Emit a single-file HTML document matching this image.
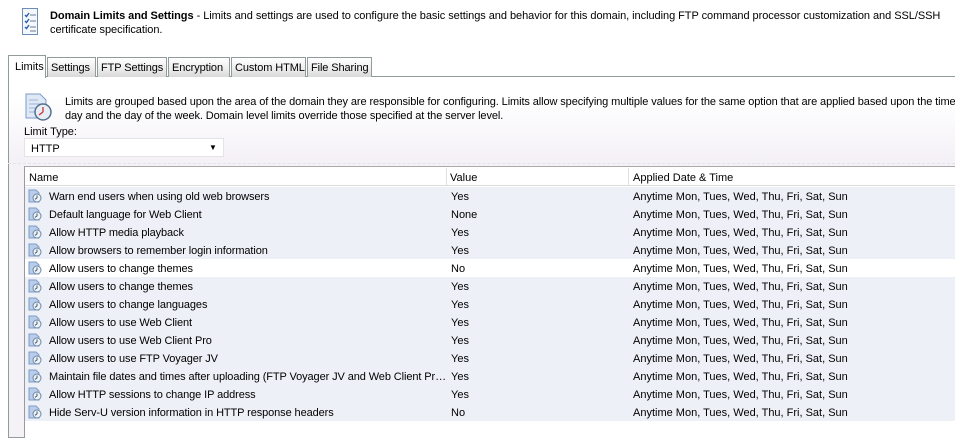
<!DOCTYPE html>
<html><head><meta charset="utf-8"><style>
*{margin:0;padding:0;box-sizing:border-box}
body{width:955px;height:438px;overflow:hidden;background:#fff;font:11px "Liberation Sans",Tahoma,sans-serif;color:#000;position:relative}
.a{position:absolute;white-space:nowrap}
.tab{position:absolute;top:57px;height:20px;border:1px solid #919b9c;border-bottom:none;background:linear-gradient(#fff,#ececec 60%,#d8d8d8);padding:4px 0 0 3px;font-size:11px;white-space:nowrap;overflow:hidden;letter-spacing:-0.1px}
.row{position:absolute;left:25px;width:930px;height:18px;background:#eef0f7}
.row span{position:absolute;top:4px;white-space:nowrap}
.ic{position:absolute;left:3px;top:2px;width:14px;height:14px}
</style></head><body>
<svg class="a" style="left:22px;top:8px" width="16" height="28" viewBox="0 0 16 28"><rect x=".5" y=".5" width="15" height="26" fill="#f4f7fb" stroke="#6d8cb8"/><path d="M3 7l1.5 1.5L7 5M3 13l1.5 1.5L7 11M3 19l1.5 1.5L7 17" stroke="#2a5fb5" stroke-width="1.4" fill="none"/><path d="M8 7h6M8 13h6M8 19h6M8 23h6" stroke="#6b7c92"/></svg>
<div class="a" style="left:50px;top:9px;line-height:14px;font-size:11px;letter-spacing:-0.05px"><b>Domain Limits and Settings</b> - Limits and settings are used to configure the basic settings and behavior for this domain, including FTP command processor customization and SSL/SSH<br>certificate specification.</div>
<div class="a" style="left:8px;top:76px;width:947px;height:362px;border:1px solid #919b9c;border-right:none;background:linear-gradient(#fff 0,#fff 20px,#f5f2f7 80px,#f4f2f6 100%)"></div>
<div class="a" style="left:8px;top:55px;width:38px;height:23px;border:1px solid #919b9c;border-bottom:none;background:#fff;padding:5px 0 0 6px">Limits</div>
<div class="tab" style="left:47px;width:49px">Settings</div>
<div class="tab" style="left:97px;width:70px">FTP Settings</div>
<div class="tab" style="left:168px;width:62px">Encryption</div>
<div class="tab" style="left:231px;width:75px">Custom HTML</div>
<div class="tab" style="left:307px;width:65px">File Sharing</div>
<svg class="a" style="left:24px;top:92px" width="30" height="30" viewBox="0 0 30 30"><path d="M2 2h14l6 6v18H2z" fill="#dfe9f6" stroke="#7d9bc8"/><path d="M5 8h9M5 12h12M5 16h8M5 20h8" stroke="#9bb3d6"/><circle cx="19" cy="20" r="8" fill="#e8eef5" stroke="#54708f" stroke-width="1.5"/><path d="M19 20v-5M19 20l-4 3" stroke="#c33" stroke-width="1.3"/></svg>
<div class="a" style="left:65px;top:95px;line-height:14px;letter-spacing:-0.1px">Limits are grouped based upon the area of the domain they are responsible for configuring. Limits allow specifying multiple values for the same option that are applied based upon the time of<br>day and the day of the week. Domain level limits override those specified at the server level.</div>
<div class="a" style="left:24px;top:126px">Limit Type:</div>
<div class="a" style="left:24px;top:138px;width:200px;height:19px;background:#fff;border:1px solid #e4e4e4;padding:4px 0 0 6px">HTTP<span style="position:absolute;left:184px;top:4px;font-size:8px">▼</span></div>
<div class="a" style="left:8px;top:163px;width:947px;border-top:1px dashed #e6e0ea"></div>
<div class="a" style="left:24px;top:166px;width:931px;height:272px;background:#fff;border-left:1px solid #9a9a9a;border-top:1px solid #aaa"></div>
<div class="a" style="left:25px;top:167px;width:930px;height:19px;background:#fff;border-bottom:1px solid #dcdcdc"></div>
<div class="a" style="left:29px;top:172px">Name</div>
<div class="a" style="left:446px;top:168px;height:17px;border-left:1px solid #e0e0e0"></div>
<div class="a" style="left:450px;top:172px">Value</div>
<div class="a" style="left:628px;top:168px;height:17px;border-left:1px solid #e0e0e0"></div>
<div class="a" style="left:633px;top:172px">Applied Date &amp; Time</div>
<div id="rows"></div>
<script>
var d=[["Warn end users when using old web browsers","Yes"],["Default language for Web Client","None"],["Allow HTTP media playback","Yes"],["Allow browsers to remember login information","Yes"],["Allow users to change themes","No"],["Allow users to change themes","Yes"],["Allow users to change languages","Yes"],["Allow users to use Web Client","Yes"],["Allow users to use Web Client Pro","Yes"],["Allow users to use FTP Voyager JV","Yes"],["Maintain file dates and times after uploading (FTP Voyager JV and Web Client Pr\u2026","Yes"],["Allow HTTP sessions to change IP address","Yes"],["Hide Serv-U version information in HTTP response headers","No"]];
var h="";d.forEach(function(r,i){h+='<div class="row" style="top:'+(187+i*18)+'px;'+(i==4?'background:#fff':'')+'"><svg class="ic" viewBox="0 0 14 14"><path d="M1 1h7l3 3v9H1z" fill="#b9cdea" stroke="#7d9bc8"/><circle cx="9" cy="9" r="4" fill="#eef2f7" stroke="#6a88a8"/><path d="M9 9V6.5M9 9l-2 1.3" stroke="#456"/></svg><span style="left:24px;letter-spacing:-0.1px">'+r[0]+'</span><span style="left:426px">'+r[1]+'</span><span style="left:608px">Anytime Mon, Tues, Wed, Thu, Fri, Sat, Sun</span></div>'});
document.getElementById("rows").innerHTML=h;
</script>
</body></html>
